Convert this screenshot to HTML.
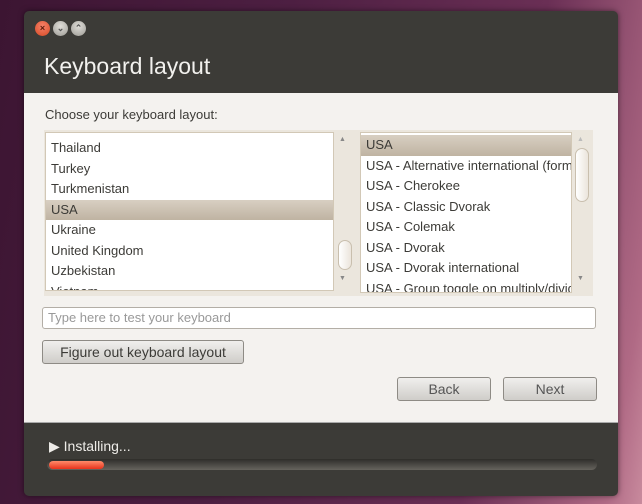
<!DOCTYPE html>
<html><head><style>
*{margin:0;padding:0;box-sizing:border-box}
body{width:642px;height:504px;overflow:hidden;position:relative;font-family:"Liberation Sans",sans-serif;background:linear-gradient(100deg,#3c1532 0%,#4d1f42 40%,#6a2f55 75%,#b06a85 95%,#c88a9d 100%)}
.win{position:absolute;left:24px;top:11px;width:594px;height:485px;border-radius:5px;background:#3c3b37;overflow:hidden;box-shadow:0 0 6px rgba(0,0,0,.5)}
.title{position:absolute;left:20px;top:42px;color:#f2f1ee;font-size:23px;font-family:"Liberation Sans",sans-serif}
.btn3{position:absolute;top:10px;width:15px;height:15px;border-radius:50%;font-size:9px;text-align:center;line-height:15px;font-weight:bold}
.content{position:absolute;left:0;top:82px;width:594px;height:330px;background:#f4f2ef;border-bottom:1px solid #aaa}
.lbl{position:absolute;left:21px;top:14px;font-size:13px;color:#3c3b37}
.panel{position:absolute;left:20px;top:37px;width:549px;height:166px;background:#ebe6dd}
.list{position:absolute;background:#fff;border:1px solid #d2c8b6;overflow:hidden}
.row{height:20.5px;line-height:20.5px;padding-left:5px;font-size:13px;color:#3c3b37;white-space:nowrap}
.sel{background:linear-gradient(#d8cfc2,#bfb3a2)}
.sb{position:absolute;width:14px;border-radius:7px;border:1px solid #c9bfae;background:linear-gradient(90deg,#fff,#ebe5dc)}
.arr{position:absolute;font-size:7px;color:#888}
.input{position:absolute;left:18px;top:214px;width:554px;height:22px;border:1px solid #b3aea6;border-radius:3px;background:#fff;color:#999;font-size:13px;padding-left:5px;line-height:20px}
.btn{position:absolute;border:1px solid #8e8b85;border-radius:3px;background:linear-gradient(#f0efed,#cfcdc9);color:#3c3b37;font-size:14px;text-align:center;line-height:22px}
.prog{position:absolute;left:23px;top:448px;width:550px;height:11px;border-radius:6px;background:linear-gradient(#2e2d2a,#66635d)}
</style></head><body>
<div class="win">
 <div class="btn3" style="left:11px;background:radial-gradient(circle at 50% 35%,#f6826a,#d64a24);color:#5a1a0a">×</div>
 <div class="btn3" style="left:29px;background:radial-gradient(circle at 50% 35%,#e0ded9,#9c9a94);color:#555">⌄</div>
 <div class="btn3" style="left:47px;background:radial-gradient(circle at 50% 35%,#e0ded9,#9c9a94);color:#555">⌃</div>
 <div class="title">Keyboard layout</div>
 <div class="content">
  <div class="lbl">Choose your keyboard layout:</div>
  <div class="panel">
   <div class="list" style="left:1px;top:2px;width:289px;height:159px">
    <div style="height:5px"></div>
    <div class="row">Thailand</div><div class="row">Turkey</div><div class="row">Turkmenistan</div>
    <div class="row sel">USA</div><div class="row">Ukraine</div><div class="row">United Kingdom</div><div class="row">Uzbekistan</div><div class="row">Vietnam</div>
   </div>
   <div class="arr" style="left:295px;top:6px">▲</div>
   <div class="sb" style="left:294px;top:110px;height:30px"></div>
   <div class="arr" style="left:295px;top:145px">▼</div>
   <div class="list" style="left:316px;top:2px;width:212px;height:161px">
    <div style="height:2px"></div>
    <div class="row sel">USA</div><div class="row">USA - Alternative international (former us_intl)</div><div class="row">USA - Cherokee</div><div class="row">USA - Classic Dvorak</div><div class="row">USA - Colemak</div><div class="row">USA - Dvorak</div><div class="row">USA - Dvorak international</div><div class="row">USA - Group toggle on multiply/divide</div>
   </div>
   <div class="arr" style="left:533px;top:6px;color:#bbb">▲</div>
   <div class="sb" style="left:531px;top:18px;height:54px"></div>
   <div class="arr" style="left:533px;top:145px">▼</div>
  </div>
  <div class="input">Type here to test your keyboard</div>
  <div class="btn" style="left:18px;top:247px;width:202px;height:24px">Figure out keyboard layout</div>
  <div class="btn" style="left:373px;top:284px;width:94px;height:24px;color:#555">Back</div>
  <div class="btn" style="left:479px;top:284px;width:94px;height:24px;color:#555">Next</div>
 </div>
 <div style="position:absolute;left:25px;top:427px;color:#eeece8;font-size:14px">▶ Installing...</div>
 <div class="prog"><div style="position:absolute;left:2px;top:2px;width:55px;height:8px;border-radius:4px;background:linear-gradient(#ff8a6a,#e8321c)"></div></div>
</div>
</body></html>
